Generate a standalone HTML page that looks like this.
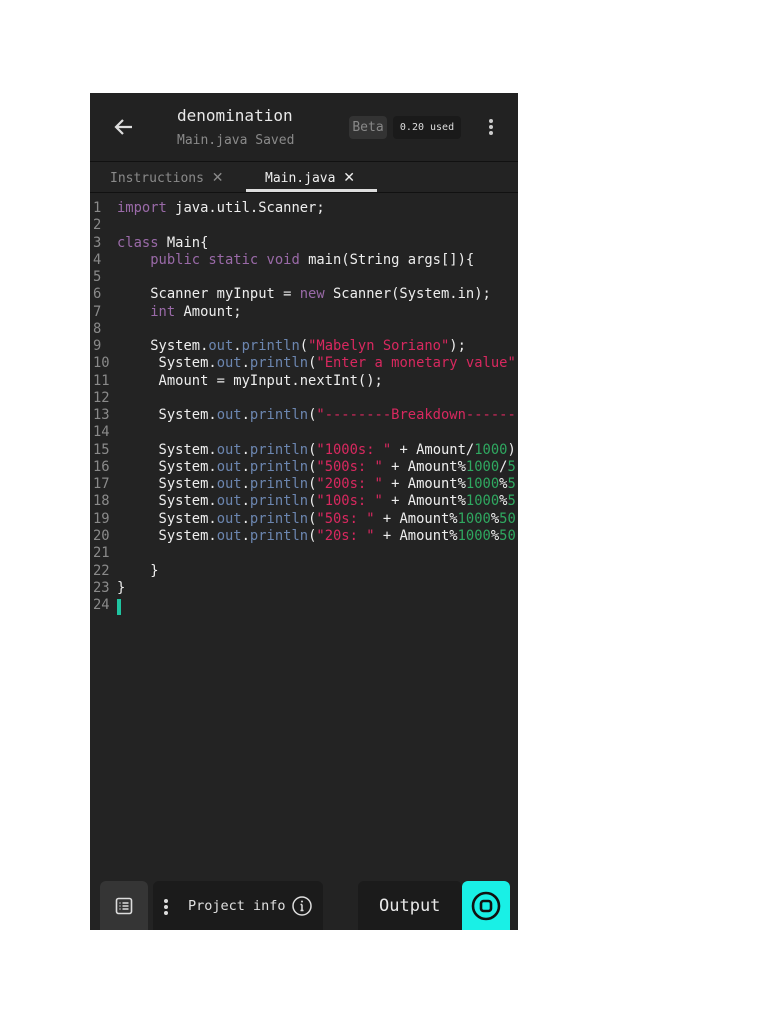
<!DOCTYPE html>
<html><head><style>
body{margin:0;width:768px;height:1024px;background:#fff;position:relative;overflow:hidden;font-family:"DejaVu Sans Mono","Liberation Mono",monospace}
#app{position:absolute;left:90px;top:93px;width:428px;height:837px;background:#232323;overflow:hidden}
.hdr{position:absolute;left:0;top:0;width:428px;height:68px;background:#222;border-bottom:1px solid #111}
.t{position:absolute;white-space:pre}
.code{position:absolute;left:0;top:107px;font-size:13.8px;line-height:17.26px;color:#eee}
.ln{position:absolute;left:3px;width:22px;color:#8a8a8a}
.cl{position:absolute;left:27px;white-space:pre}
.k{color:#9a6aa8}.o{color:#6c86b0}.s{color:#d8285f}.n{color:#2fa860}
.x{font-family:"DejaVu Sans",sans-serif;font-weight:bold;font-size:14px}
</style></head><body>
<div id="app">
<div class="hdr"></div>
<svg class="t" style="left:22px;top:22px" width="24" height="24" viewBox="0 0 24 24"><path d="M20 12H5M11 5l-7 7 7 7" stroke="#ddd" stroke-width="2.2" fill="none"/></svg>
<div class="t" style="left:87px;top:13px;font-size:16px;color:#e8e8e8">denomination</div>
<div class="t" style="left:87px;top:40px;font-size:13px;color:#8a8a8a">Main.java Saved</div>
<div class="t" style="left:259px;top:23px;width:38px;height:23px;background:#333;border-radius:4px;color:#888;font-size:13px;line-height:23px;text-align:center">Beta</div>
<div class="t" style="left:303px;top:23px;width:68px;height:23px;background:#1a1a1a;border-radius:4px;color:#ddd;font-size:10px;line-height:23px;text-align:center">0.20 used</div>
<div class="t" style="left:399px;top:26px;width:4px;height:4px;border-radius:2px;background:#ccc;box-shadow:0 6px 0 #ccc,0 12px 0 #ccc"></div>
<div class="t" style="left:20px;top:77px;font-size:13px;color:#8a8a8a">Instructions <span class="x">✕</span></div>
<div class="t" style="left:175px;top:77px;font-size:13px;color:#eee">Main.java <span class="x">✕</span></div>
<div class="t" style="left:156px;top:96px;width:131px;height:3px;background:#ddd"></div>
<div class="t" style="left:0;top:99px;width:428px;height:1px;background:#111"></div>
<div class="code">
<div class="ln" style="top:0">1</div><div class="cl" style="top:0"><span class="k">import</span> java.util.Scanner;</div>
<div class="ln" style="top:17.26px">2</div>
<div class="ln" style="top:34.5px">3</div><div class="cl" style="top:34.5px"><span class="k">class</span> Main{</div>
<div class="ln" style="top:51.8px">4</div><div class="cl" style="top:51.8px">    <span class="k">public static void</span> main(String args[]){</div>
<div class="ln" style="top:69px">5</div>
<div class="ln" style="top:86.3px">6</div><div class="cl" style="top:86.3px">    Scanner myInput = <span class="k">new</span> Scanner(System.in);</div>
<div class="ln" style="top:103.6px">7</div><div class="cl" style="top:103.6px">    <span class="k">int</span> Amount;</div>
<div class="ln" style="top:120.8px">8</div>
<div class="ln" style="top:138.1px">9</div><div class="cl" style="top:138.1px">    System.<span class="o">out</span>.<span class="o">println</span>(<span class="s">"Mabelyn Soriano"</span>);</div>
<div class="ln" style="top:155.3px">10</div><div class="cl" style="top:155.3px">     System.<span class="o">out</span>.<span class="o">println</span>(<span class="s">"Enter a monetary value"</span></div>
<div class="ln" style="top:172.6px">11</div><div class="cl" style="top:172.6px">     Amount = myInput.nextInt();</div>
<div class="ln" style="top:189.9px">12</div>
<div class="ln" style="top:207.1px">13</div><div class="cl" style="top:207.1px">     System.<span class="o">out</span>.<span class="o">println</span>(<span class="s">"--------Breakdown------</span></div>
<div class="ln" style="top:224.4px">14</div>
<div class="ln" style="top:241.6px">15</div><div class="cl" style="top:241.6px">     System.<span class="o">out</span>.<span class="o">println</span>(<span class="s">"1000s: "</span> + Amount/<span class="n">1000</span>)</div>
<div class="ln" style="top:258.9px">16</div><div class="cl" style="top:258.9px">     System.<span class="o">out</span>.<span class="o">println</span>(<span class="s">"500s: "</span> + Amount%<span class="n">1000</span>/<span class="n">5</span></div>
<div class="ln" style="top:276.2px">17</div><div class="cl" style="top:276.2px">     System.<span class="o">out</span>.<span class="o">println</span>(<span class="s">"200s: "</span> + Amount%<span class="n">1000</span>%<span class="n">5</span></div>
<div class="ln" style="top:293.4px">18</div><div class="cl" style="top:293.4px">     System.<span class="o">out</span>.<span class="o">println</span>(<span class="s">"100s: "</span> + Amount%<span class="n">1000</span>%<span class="n">5</span></div>
<div class="ln" style="top:310.7px">19</div><div class="cl" style="top:310.7px">     System.<span class="o">out</span>.<span class="o">println</span>(<span class="s">"50s: "</span> + Amount%<span class="n">1000</span>%<span class="n">50</span></div>
<div class="ln" style="top:327.9px">20</div><div class="cl" style="top:327.9px">     System.<span class="o">out</span>.<span class="o">println</span>(<span class="s">"20s: "</span> + Amount%<span class="n">1000</span>%<span class="n">50</span></div>
<div class="ln" style="top:345.2px">21</div>
<div class="ln" style="top:362.5px">22</div><div class="cl" style="top:362.5px">    }</div>
<div class="ln" style="top:379.7px">23</div><div class="cl" style="top:379.7px">}</div>
<div class="ln" style="top:397px">24</div><div class="cl" style="top:399px;width:4px;height:16px;background:#1fc4a0"></div>
</div>
<div class="t" style="left:10px;top:788px;width:48px;height:49px;background:#353535;border-radius:6px 6px 0 0"></div>
<svg class="t" style="left:24px;top:803px" width="20" height="20" viewBox="0 0 20 20"><rect x="2.5" y="2.5" width="15" height="15" rx="2" stroke="#ddd" stroke-width="1.6" fill="none"/><path d="M5.5 7h1M8.5 7h6M5.5 10h1M8.5 10h6M5.5 13h1M8.5 13h6" stroke="#ddd" stroke-width="1.5"/></svg>
<div class="t" style="left:63px;top:788px;width:170px;height:49px;background:#1b1b1b;border-radius:6px 6px 0 0"></div>
<div class="t" style="left:74px;top:806px;width:4px;height:4px;border-radius:2px;background:#ddd;box-shadow:0 6px 0 #ddd,0 12px 0 #ddd"></div>
<div class="t" style="left:98px;top:805px;font-size:13.5px;color:#e0e0e0">Project info</div>
<svg class="t" style="left:201px;top:802px" width="22" height="22" viewBox="0 0 22 22"><circle cx="11" cy="11" r="9" stroke="#ddd" stroke-width="1.5" fill="none"/><path d="M11 9.5v6M9.5 15.5h3M9.5 9.5h1.5" stroke="#ddd" stroke-width="1.5"/><circle cx="11" cy="6.5" r="1" fill="#ddd"/></svg>
<div class="t" style="left:268px;top:788px;width:104px;height:49px;background:#1b1b1b;border-radius:6px 6px 0 0"></div>
<div class="t" style="left:289px;top:803px;font-size:17px;color:#e8e8e8">Output</div>
<div class="t" style="left:372px;top:788px;width:48px;height:49px;background:#19f0e6;border-radius:6px 6px 0 0"></div>
<svg class="t" style="left:380px;top:797px" width="32" height="32" viewBox="0 0 32 32"><circle cx="16" cy="16" r="13" stroke="#111" stroke-width="2.6" fill="none"/><rect x="11" y="11" width="10" height="10" rx="2.5" stroke="#111" stroke-width="2.6" fill="none"/></svg>
</div>
</body></html>
